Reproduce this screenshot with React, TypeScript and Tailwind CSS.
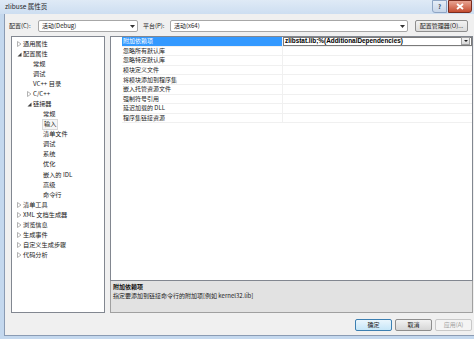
import { ReactNode } from 'react';

const treeItems: { label: string; level: number; icon?: 'open' | 'closed'; selected?: boolean }[] = [
  { label: '通用属性', level: 0, icon: 'closed' },
  { label: '配置属性', level: 0, icon: 'open' },
  { label: '常规', level: 1 },
  { label: '调试', level: 1 },
  { label: 'VC++ 目录', level: 1 },
  { label: 'C/C++', level: 1, icon: 'closed' },
  { label: '链接器', level: 1, icon: 'open' },
  { label: '常规', level: 2 },
  { label: '输入', level: 2, selected: true },
  { label: '清单文件', level: 2 },
  { label: '调试', level: 2 },
  { label: '系统', level: 2 },
  { label: '优化', level: 2 },
  { label: '嵌入的 IDL', level: 2 },
  { label: '高级', level: 2 },
  { label: '命令行', level: 2 },
  { label: '清单工具', level: 0, icon: 'closed' },
  { label: 'XML 文档生成器', level: 0, icon: 'closed' },
  { label: '浏览信息', level: 0, icon: 'closed' },
  { label: '生成事件', level: 0, icon: 'closed' },
  { label: '自定义生成步骤', level: 0, icon: 'closed' },
  { label: '代码分析', level: 0, icon: 'closed' },
];

const gridRows = [
  '附加依赖项',
  '忽略所有默认库',
  '忽略特定默认库',
  '模块定义文件',
  '将模块添加到程序集',
  '嵌入托管资源文件',
  '强制符号引用',
  '延迟加载的 DLL',
  '程序集链接资源',
];

const cjk = "font-['Noto_Sans_CJK_SC','Microsoft_YaHei',sans-serif]";

function Expander({ kind }: { kind: 'open' | 'closed' }) {
  if (kind === 'open') {
    return (
      <svg width="5" height="5" viewBox="0 0 5 5" className="shrink-0">
        <path d="M4.5 0.5 L4.5 4.5 L0.5 4.5 Z" fill="#404040" />
      </svg>
    );
  }
  return (
    <svg width="5" height="6" viewBox="0 0 5 6" className="shrink-0">
      <path d="M0.5 0.5 L4 3 L0.5 5.5 Z" fill="none" stroke="#a0a0a0" strokeWidth="0.8" />
    </svg>
  );
}

function Combo({ width, children }: { width: string; children: ReactNode }) {
  return (
    <div className={`${width} h-[12px] flex items-center bg-white border border-[#a7a7a7] rounded-[2px] pl-[3px] pr-[2px]`}>
      <span className="flex-1 text-[6px] leading-none text-[#1a1a1a]">{children}</span>
      <svg width="5" height="3" viewBox="0 0 5 3">
        <path d="M0 0 H5 L2.5 3 Z" fill="#333" />
      </svg>
    </div>
  );
}

function Button({ label, primary, disabled }: { label: string; primary?: boolean; disabled?: boolean }) {
  return (
    <div
      className={`w-[37px] h-[12px] flex items-center justify-center rounded-[2px] border text-[6px] leading-none ${
        primary
          ? 'border-[#3c7fb1] bg-gradient-to-b from-[#eaf6fd] to-[#c6e6f8] text-[#1a1a1a]'
          : disabled
          ? 'border-[#c8c8c8] bg-[#f4f4f4] text-[#a0a0a0]'
          : 'border-[#8e8e8e] bg-gradient-to-b from-[#f2f2f2] to-[#d6d6d6] text-[#1a1a1a]'
      }`}
    >
      {label}
    </div>
  );
}

export default function App() {
  return (
    <div className={`w-[474px] h-[339px] flex flex-col bg-[#c4d8ee] ${cjk} overflow-hidden`}>
      {/* Title bar */}
      <div className="h-[14px] flex items-start bg-gradient-to-b from-[#dfeaf6] to-[#cddef1] shrink-0">
        <span className="pl-[5px] pt-[3px] text-[6.5px] leading-none text-[#1e1e1e]">zlibuse 属性页</span>
        <div className="flex-1" />
        <div className="w-[15px] h-[13px] mr-[1px] flex items-center justify-center bg-gradient-to-b from-[#e6eef8] to-[#c8d6e8] border border-[#8ea5c4] rounded-bl-[3px] text-[6px] text-[#3a4a60] font-bold">
          ?
        </div>
        <div className="w-[24px] h-[13px] mr-[2px] flex items-center justify-center bg-gradient-to-b from-[#e8a493] to-[#c44b2f] border border-[#7a2c1e] rounded-br-[3px]">
          <svg width="8" height="7" viewBox="0 0 8 7">
            <path d="M1 1 L7 6 M7 1 L1 6" stroke="white" strokeWidth="1.8" />
          </svg>
        </div>
      </div>

      {/* Client area */}
      <div className="flex-1 flex mx-[4px] mb-[3px]">
        <div className="flex-1 flex flex-col bg-[#f0f0f0] border-l border-r border-b border-[#8a9bb3]">
          {/* Config row */}
          <div className="h-[22px] flex items-center pt-[2px] pl-[4px] pr-[6px] gap-[3px] text-[6px] leading-none text-[#1a1a1a]">
            <span className="w-[26px]">配置(C):</span>
            <Combo width="w-[100px]">活动(Debug)</Combo>
            <span className="ml-[2px] w-[24px]">平台(P):</span>
            <Combo width="w-[238px]">活动(x64)</Combo>
            <div className="ml-[4px] w-[53px] h-[12px] flex items-center justify-center border border-[#8e8e8e] rounded-[2px] bg-gradient-to-b from-[#f2f2f2] to-[#dcdcdc]">
              配置管理器(O)...
            </div>
          </div>

          {/* Main */}
          <div className="h-[277px] flex pl-[6px] pr-[1px] gap-[5px]">
            {/* Tree */}
            <div className="w-[94px] h-[277px] bg-white border border-[#828790] pt-[2px]">
              {treeItems.map((item, i) => (
                <div
                  key={i}
                  className="h-[10.05px] flex items-center"
                  style={{ paddingLeft: 5 + item.level * 10 }}
                >
                  <span className="w-[6px] flex items-center">
                    {item.icon && <Expander kind={item.icon} />}
                  </span>
                  <span
                    className={`text-[6.2px] leading-none whitespace-nowrap text-[#1a1a1a] ${
                      item.selected ? 'px-[1px] py-[1px] -ml-[1px] border border-[#d9d9d9] bg-[#f6f6f6]' : ''
                    }`}
                  >
                    {item.label}
                  </span>
                </div>
              ))}
            </div>

            {/* Grid + description */}
            <div className="flex-1 flex flex-col">
              <div className="h-[245px] bg-white border border-[#828790] flex">
                <div className="w-[11px]" />
                <div className="flex-1 flex flex-col">
                  {gridRows.map((name, i) => (
                    <div key={i} className="h-[9.6px] flex border-b border-[#f0f0f0]">
                      <div
                        className={`w-[161px] flex items-center pl-[1px] text-[6px] leading-none whitespace-nowrap border-r border-[#f0f0f0] ${
                          i === 0 ? 'bg-[#3399ff] text-white' : 'text-[#1a1a1a]'
                        }`}
                      >
                        {name}
                      </div>
                      <div className="flex-1 flex items-center">
                        {i === 0 && (
                          <div className="flex-1 h-full flex items-center border border-[#7a7a7a] pl-[1px]">
                            <span className="flex-1 font-['Liberation_Sans',sans-serif] font-bold text-[6.4px] leading-none text-black">
                              zlibstat.lib;%(AdditionalDependencies)
                            </span>
                            <div className="w-[9px] h-[8px] mr-[1px] flex items-center justify-center bg-gradient-to-b from-[#f4f4f4] to-[#d8d8d8] border border-[#a0a0a0]">
                              <svg width="4" height="2" viewBox="0 0 4 2">
                                <path d="M0 0 H4 L2 2 Z" fill="#222" />
                              </svg>
                            </div>
                          </div>
                        )}
                      </div>
                    </div>
                  ))}
                </div>
              </div>
              <div className="h-[32px] bg-[#e2e2e2] border border-t-0 border-[#a0a0a0] flex flex-col pt-[3px] pl-[2px] gap-[3px]">
                <span className="text-[6px] leading-none font-bold text-[#111]">附加依赖项</span>
                <span className="text-[6px] leading-none text-[#1a1a1a]">
                  指定要添加到链接命令行的附加项[例如 kernel32.lib]
                </span>
              </div>
            </div>
          </div>

          {/* Buttons */}
          <div className="flex-1 flex items-center justify-end gap-[3px] pr-[2px] pt-[1px]">
            <Button label="确定" primary />
            <Button label="取消" />
            <Button label="应用(A)" disabled />
          </div>
        </div>
      </div>
    </div>
  );
}
